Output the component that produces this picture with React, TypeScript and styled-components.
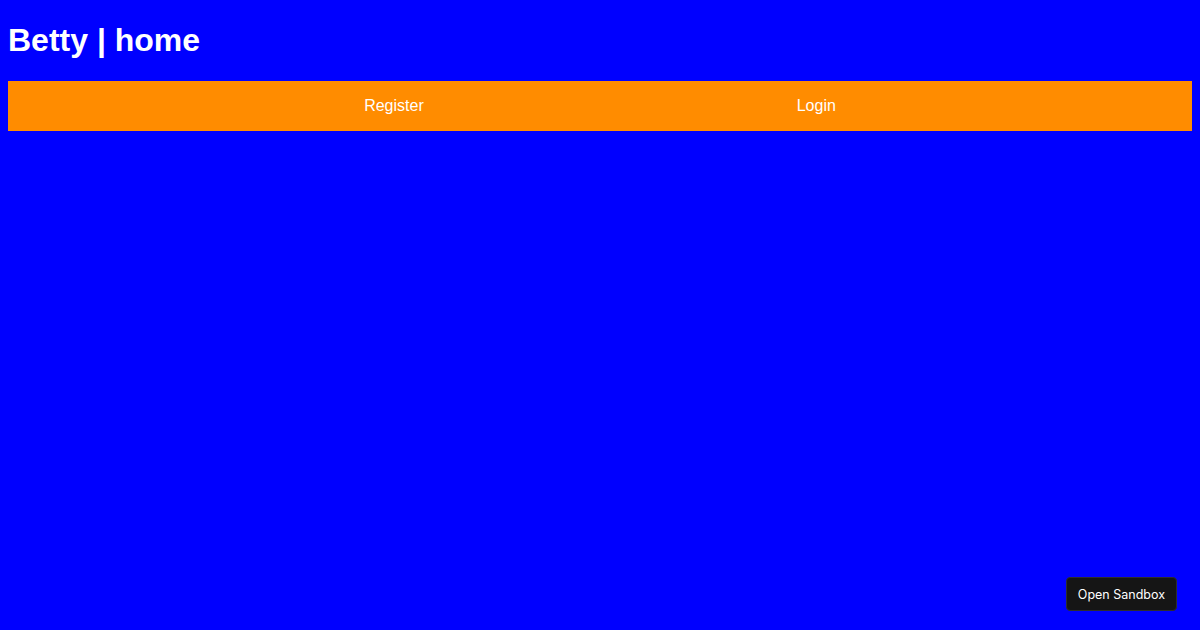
import styled, { createGlobalStyle } from "styled-components";

const GlobalStyle = createGlobalStyle`
  html, body {
    background-color: #0000ff;
  }
  body {
    margin: 8px;
    font-family: "Liberation Sans", Arial, sans-serif;
    color: #fff;
  }
`;

const Title = styled.h1`
  font-size: 32px;
  font-weight: bold;
  margin: 14px 0 22px;
  line-height: 37px;
  color: #fff;
`;

const Nav = styled.nav`
  display: flex;
  justify-content: center;
  align-items: center;
  gap: 373px;
  height: 50px;
  background-color: #ff8c00;
`;

const NavLink = styled.a`
  color: #fff;
  font-size: 16px;
  text-decoration: none;
  cursor: pointer;
`;

const SandboxButton = styled.button`
  position: fixed;
  right: 23px;
  bottom: 19px;
  height: 34px;
  padding: 0 11px;
  background-color: #151515;
  border: 1px solid #2e2e2e;
  border-radius: 4px;
  color: #fff;
  font-family: "Inter", "Liberation Sans", sans-serif;
  font-size: 12.5px;
  cursor: pointer;
`;

const App = () => {
  return (
    <>
      <GlobalStyle />
      <Title>Betty | home</Title>
      <Nav>
        <NavLink>Register</NavLink>
        <NavLink>Login</NavLink>
      </Nav>
      <SandboxButton>Open Sandbox</SandboxButton>
    </>
  );
};

export default App;
